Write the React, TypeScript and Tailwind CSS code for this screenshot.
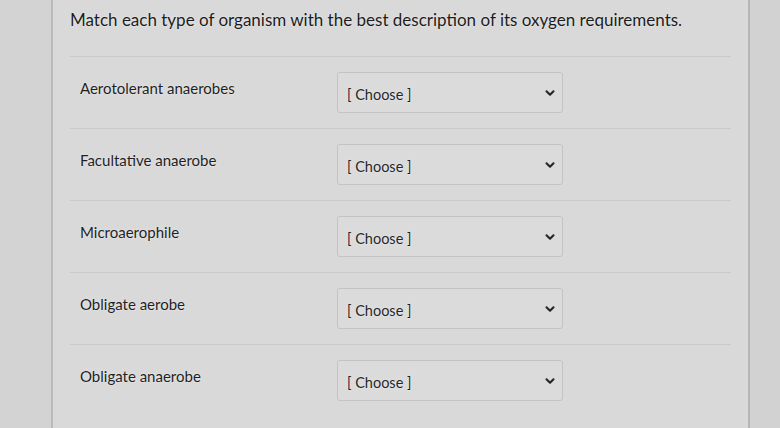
import { ChevronDown } from 'lucide-react';

const organisms = [
  'Aerotolerant anaerobes',
  'Facultative anaerobe',
  'Microaerophile',
  'Obligate aerobe',
  'Obligate anaerobe',
];

// Single match row: label on the left, dropdown in the middle
function MatchRow({ label }: { label: string }) {
  return (
    <div className="flex items-start border-b border-[#c9cac9] py-[15px] last:border-b-0">
      <div className="w-[267px] pl-[10px] pt-[6px] text-[15px] leading-5 text-[#1f1f1f] [text-shadow:0_0_2px_#f4f4f4]">
        {label}
      </div>
      <div className="flex h-[41px] w-[226px] items-center justify-between rounded-[3px] border border-[#c2c3c2] bg-[#dadbda] pl-[9px] pr-[5px]">
        <span className="pt-[4px] text-[14.5px] text-[#262626] [text-shadow:0_0_2px_#f4f4f4]">[ Choose ]</span>
        <ChevronDown className="h-[14px] w-[14px] text-[#262626]" strokeWidth={3.6} />
      </div>
    </div>
  );
}

export default function App() {
  return (
    <div className="flex h-[428px] w-[780px] overflow-hidden bg-[#d3d4d3] font-['Lato','Liberation_Sans',sans-serif]">
      {/* Left gutter */}
      <div className="w-[53px] shrink-0 border-r-2 border-[#b9bab9] bg-[#d2d3d2]" />

      {/* Question body */}
      <div className="flex-1 bg-[#d8d9d8] px-[17px]">
        <h2 className="pt-[8px] pb-[24px] text-[17px] leading-6 text-[#1c1c1c] [text-shadow:0_0_2px_#f4f4f4]">
          Match each type of organism with the best description of its oxygen requirements.
        </h2>
        <div className="border-t border-[#c9cac9]">
          {organisms.map((o) => (
            <MatchRow key={o} label={o} />
          ))}
        </div>
      </div>

      {/* Right gutter */}
      <div className="w-[32px] shrink-0 border-l-2 border-[#b5b6b5] bg-[#d1d2d1]" />
    </div>
  );
}
